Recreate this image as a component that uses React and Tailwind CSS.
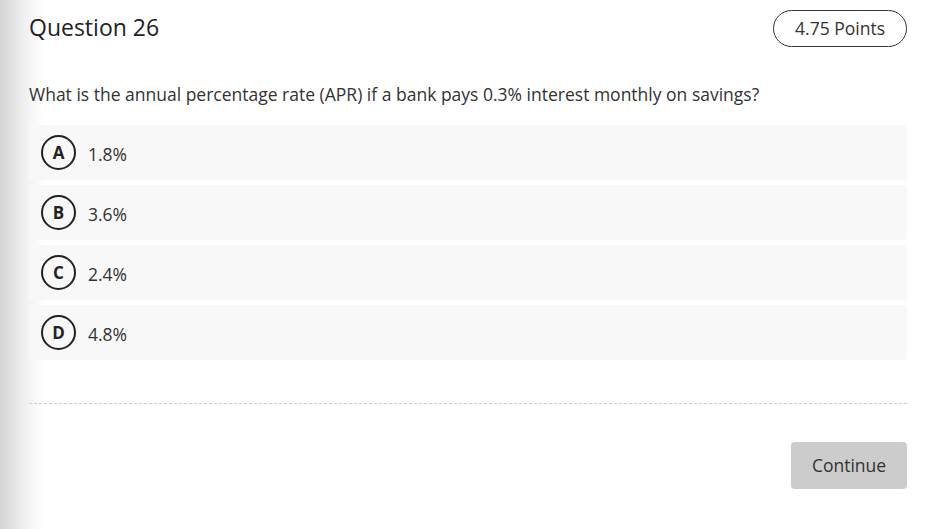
const options = [
    { key: 'A', text: '1.8%' },
    { key: 'B', text: '3.6%' },
    { key: 'C', text: '2.4%' },
    { key: 'D', text: '4.8%' },
];

export default function App() {
    return (
        <div
            className="relative w-[926px] h-[529px] overflow-hidden bg-white text-[#333333]"
            style={{ fontFamily: '"Open Sans", "Liberation Sans", sans-serif' }}
        >
            {/* sombra lateral izquierda */}
            <div className="absolute inset-y-0 left-0 w-[44px] bg-gradient-to-r from-[#d4d4d4] via-[#eeeeee] to-white pointer-events-none" />

            <div className="relative pl-[29px] pr-[19px]">
                {/* ── Header ── */}
                <div className="flex items-center justify-between pt-[10px] h-[47px]">
                    <h1 className="text-[23px] text-[#222222] leading-none -mt-[3px]">Question 26</h1>
                    <div className="h-[37px] px-[21px] flex items-center rounded-full border border-[#333333] text-[17.5px] text-[#333333]">
                        4.75 Points
                    </div>
                </div>

                <p className="mt-[34px] text-[17.5px] leading-[26px] text-[#333333]">
                    What is the annual percentage rate (APR) if a bank pays 0.3% interest monthly on savings?
                </p>

                {/* ── Opciones ── */}
                <div className="mt-[18px] flex flex-col gap-[5px]">
                    {options.map(o => (
                        <div key={o.key} className="h-[55px] flex items-center gap-[12px] px-[12px] rounded-[3px] bg-[#f8f8f8]">
                            <span className="w-[35px] h-[35px] rounded-full border-2 border-[#222222] flex items-center justify-center text-[17px] font-bold text-[#222222]">
                                {o.key}
                            </span>
                            <span className="mt-[3px] text-[17.5px] text-[#333333]">{o.text}</span>
                        </div>
                    ))}
                </div>

                <div className="mt-[43px] border-t border-dashed border-[#cccccc]" />

                <div className="mt-[38px] flex justify-end">
                    <button
                        type="button"
                        className="w-[116px] h-[47px] rounded-[4px] bg-[#cccccc] text-[17.5px] text-[#333333]"
                    >
                        Continue
                    </button>
                </div>
            </div>
        </div>
    );
}
